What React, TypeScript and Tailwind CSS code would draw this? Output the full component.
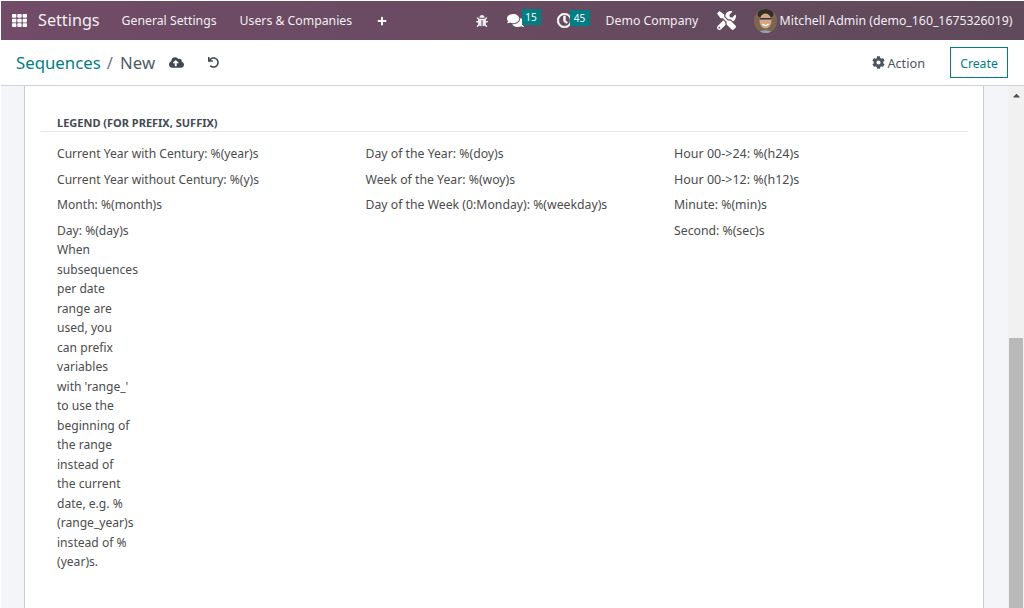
import React from "react";
import { FaBug, FaComments, FaRegClock, FaTools, FaCog, FaCloudUploadAlt, FaUndo, FaPlus, FaTh, FaCaretUp } from "react-icons/fa";

const font = { fontFamily: '"Noto Sans", "Open Sans", sans-serif' };

const rowHeights = ["h-[26px]", "h-[25px]", "h-[26px]", "h-[19px]"];

function Col({ items, children }: { items: { t: string; c: string }[]; children?: React.ReactNode }) {
  return (
    <div className="w-[308.5px] shrink-0">
      {items.map((it, i) => (
        <div key={it.t} className={`${rowHeights[i]} ${it.c} whitespace-nowrap leading-[20px]`}>{it.t}</div>
      ))}
      {children}
    </div>
  );
}

const longLines = [
  "When", "subsequences", "per date", "range are", "used, you", "can prefix", "variables", "with 'range_'", "to use the",
  "beginning of", "the range", "instead of", "the current", "date, e.g. %", "(range_year)s", "instead of %", "(year)s.",
];

export default function App() {
  return (
    <div className="h-[608px] w-[1024px] overflow-hidden bg-white pl-px pt-px flex flex-col text-[12.25px] text-[#4c4c4c]" style={font}>
      <header className="flex h-[39px] shrink-0 items-center whitespace-nowrap bg-gradient-to-r from-[#714b67] to-[#5f4a5b] text-white">
        <FaTh className="ml-[11px] text-[15px]" />
        <span className="ml-[11px] text-[16.2px] text-[#f3eef2]">Settings</span>
        <span className="ml-[22px] w-[94px] pt-px text-[#f3eef2]">General Settings</span>
        <span className="ml-[24px] w-[113px] pt-px text-[#f3eef2]">Users &amp; Companies</span>
        <FaPlus className="ml-[24px] text-[10px]" />
        <FaBug className="ml-[89px] text-[12px] text-[#eee]" />
        <div className="relative ml-[19px] flex w-[50px] items-center">
          <FaComments className="text-[17px]" />
          <span className="absolute left-[15px] top-[-3px] flex h-[16px] w-[19px] items-center justify-center bg-[#017e84] text-[10px]">15</span>
        </div>
        <div className="relative flex w-[49px] items-center">
          <FaRegClock className="stroke-white stroke-[24px] text-[15px]" />
          <span className="absolute left-[13px] top-[-3px] flex h-[16px] w-[20px] items-center justify-center bg-[#017e84] text-[10px]">45</span>
        </div>
        <span className="w-[94px] pt-px text-[#f3eef2]">Demo Company</span>
        <FaTools className="ml-[17px] text-[19px]" />
        <div className="ml-[18px] h-[24px] w-[23px] overflow-hidden rounded-full">
          <svg viewBox="0 0 23 24" className="h-full w-full">
            <rect width="23" height="24" fill="#7d6650" />
            <ellipse cx="11.5" cy="5" rx="8" ry="5" fill="#352c26" />
            <ellipse cx="11.5" cy="12" rx="6" ry="7.5" fill="#d3a488" />
            <rect x="6" y="9" width="11" height="1.5" fill="#3a3230" />
            <path d="M8.500 15q3 3 6 0" stroke="#fff" strokeWidth="1.4" fill="none" />
            <path d="M4 24q7.500-6 15 0z" fill="#8fa0ae" />
          </svg>
        </div>
        <span className="ml-[3px] pt-px text-[12.3px] text-[#f3eef2]">Mitchell Admin (demo_160_1675326019)</span>
      </header>

      <div className="flex h-[46px] shrink-0 items-center border-b border-[#ced4da] bg-white">
        <span className="ml-[15px] text-[16.8px] text-[#017e84]">Sequences</span>
        <span className="ml-[6px] text-[16.8px] text-[#6b7a85]">/</span>
        <span className="ml-[7px] text-[16.8px] text-[#4f5b66]">New</span>
        <FaCloudUploadAlt className="ml-[14px] text-[15px] text-[#3f4a52]" />
        <FaUndo className="ml-[24px] text-[11px] text-[#3f4a52]" />
        <FaCog className="ml-auto text-[13px] text-[#4c5560]" />
        <span className="ml-[2px] pt-[2px] text-[12.7px] text-[#4c5560]">Action</span>
        <button className="ml-[25px] mr-[16px] flex h-[31px] w-[58px] items-center justify-center border border-[#017e84] pt-[3px] text-[#017e84]">Create</button>
      </div>

      <div className="flex min-h-0 flex-1">
        <div className="w-[23px] shrink-0 bg-[#f4f5f9]" />
        <main className="w-[960px] shrink-0 border-x border-[#c8ccd4] bg-white pl-[16px] pr-[15px]">
          <div className="mt-[31px] h-[14px] pl-[16px] text-[11px] font-bold leading-[12px] text-[#444b53]">LEGEND (FOR PREFIX, SUFFIX)</div>
          <div className="border-t border-[#e5e7eb]" />
          <div className="mt-[12px] flex pl-[16px]">
            <Col items={[
              { t: "Current Year with Century: %(year)s", c: "text-[12.1px]" },
              { t: "Current Year without Century: %(y)s", c: "text-[12.1px]" },
              { t: "Month: %(month)s", c: "text-[12.1px]" },
              { t: "Day: %(day)s", c: "text-[12.1px]" },
            ]}>
              <div className="whitespace-nowrap text-[12.1px] leading-[19.5px]">
                {longLines.map((l) => (
                  <div key={l}>{l}</div>
                ))}
              </div>
            </Col>
            <Col items={[
              { t: "Day of the Year: %(doy)s", c: "" },
              { t: "Week of the Year: %(woy)s", c: "" },
              { t: "Day of the Week (0:Monday): %(weekday)s", c: "" },
            ]} />
            <Col items={[
              { t: "Hour 00->24: %(h24)s", c: "text-[12.5px]" },
              { t: "Hour 00->12: %(h12)s", c: "text-[12.5px]" },
              { t: "Minute: %(min)s", c: "" },
              { t: "Second: %(sec)s", c: "" },
            ]} />
          </div>
        </main>
        <div className="w-[24px] shrink-0 bg-[#f4f5f9]" />
        <div className="flex w-[16px] shrink-0 flex-col bg-[#f1f1f1]">
          <FaCaretUp className="mx-auto mt-[4px] text-[11px] text-[#505050]" />
          <div className="mt-auto ml-[1px] h-[270px] w-[14px] bg-[#b9b9b9]" />
        </div>
      </div>
    </div>
  );
}
